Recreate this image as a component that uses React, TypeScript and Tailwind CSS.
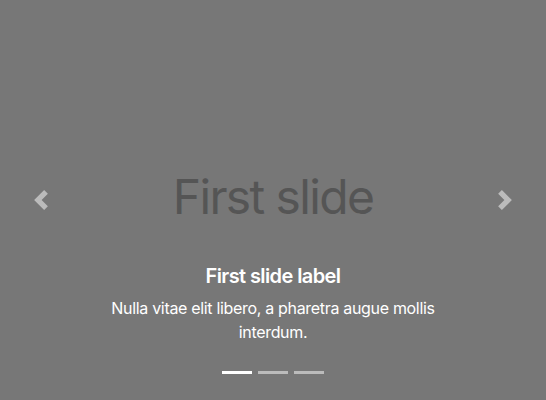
import { useState } from "react";

const slides = [
  { title: "First slide", label: "First slide label", text: "Nulla vitae elit libero, a pharetra augue mollis interdum." },
  { title: "Second slide", label: "Second slide label", text: "Lorem ipsum dolor sit amet, consectetur adipiscing elit." },
  { title: "Third slide", label: "Third slide label", text: "Praesent commodo cursus magna, vel scelerisque nisl consectetur." },
];

function Chevron({ dir }: { dir: "prev" | "next" }) {
  return (
    <svg width="20" height="20" viewBox="0 0 8 8" fill="#fff">
      {dir === "prev" ? (
        <path d="M5.25 0l-4 4 4 4 1.5-1.5L4.25 4l2.5-2.5L5.25 0z" />
      ) : (
        <path d="M2.75 0l-1.5 1.5L3.75 4l-2.5 2.5L2.75 8l4-4-4-4z" />
      )}
    </svg>
  );
}

export default function App() {
  const [active, setActive] = useState(0);
  const slide = slides[active];

  return (
    <div
      className="relative h-[400px] w-full overflow-hidden bg-[#777] text-white"
      style={{ fontFamily: "Inter, 'Noto Sans', sans-serif" }}
    >
      <div className="flex h-full items-center justify-center">
        <span className="translate-y-[-3px] text-[48px] leading-none tracking-[-0.034em] text-[#555]">
          {slide.title}
        </span>
      </div>

      <button
        type="button"
        className="absolute inset-y-0 left-0 flex w-[15%] items-center justify-center opacity-50"
        onClick={() => setActive((active + slides.length - 1) % slides.length)}
        aria-label="Previous"
      >
        <Chevron dir="prev" />
      </button>
      <button
        type="button"
        className="absolute inset-y-0 right-0 flex w-[15%] items-center justify-center opacity-50"
        onClick={() => setActive((active + 1) % slides.length)}
        aria-label="Next"
      >
        <Chevron dir="next" />
      </button>

      <div className="absolute bottom-5 left-[15%] right-[15%] py-5 text-center">
        <h5 className="mb-2 text-[20px] font-semibold leading-[1.2] tracking-[-0.03em]">{slide.label}</h5>
        <p className="mb-4 text-[16px] leading-6 tracking-[-0.02em]">{slide.text}</p>
      </div>

      <ol className="absolute bottom-0 left-0 right-0 mb-4 flex justify-center">
        {slides.map((s, i) => (
          <li
            key={s.title}
            onClick={() => setActive(i)}
            className={`mx-[3px] box-content h-[3px] w-[30px] cursor-pointer border-y-[10px] border-transparent bg-white bg-clip-padding ${
              i === active ? "opacity-100" : "opacity-50"
            }`}
          />
        ))}
      </ol>
    </div>
  );
}
